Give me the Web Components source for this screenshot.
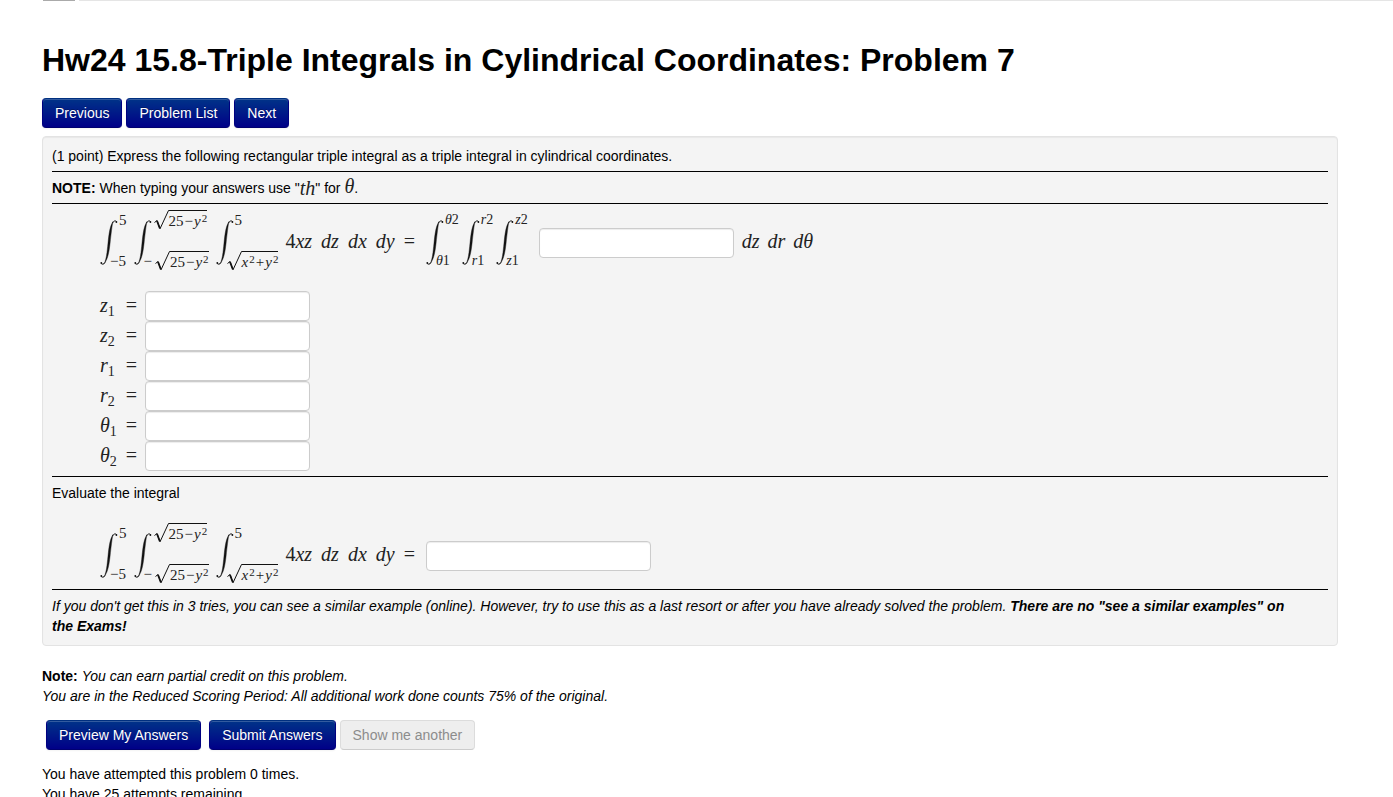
<!DOCTYPE html>
<html lang="en">
<head>
<meta charset="utf-8">
<title>Hw24 15.8-Triple Integrals in Cylindrical Coordinates: Problem 7</title>
<style>
    body{
        margin: 0;
        background-color: white;
        color: black;
        font: 14px/20px "Liberation Sans", Arial, sans-serif;
    }
</style>
</head>
<body>
<problem-page></problem-page>

<script>
// top of the page, heading and everything under it
class ProblemPage extends HTMLElement{
    constructor() {
        super();
        this.attachShadow({mode: "open"});
        this.shadowRoot.innerHTML = `
            <style>
                :host{
                    display: block;
                }
                .crumbs{
                    display: flex;
                    gap: 4px;
                    height: 1px;
                    padding-left: 43px;
                }
                .crumbs i{
                    width: 32px;
                    background-color: #aaa;
                }
                .crumbs b{
                    flex: 1;
                    background-color: #e5e5e5;
                }
                main{
                    padding: 0 55px 0 42px;
                }
                h1{
                    margin: 39px 0 18px;
                    font-size: 32px;
                    line-height: 40px;
                }
                .nav, .actions{
                    display: flex;
                    gap: 4px;
                }
                .nav{
                    margin-bottom: 8px;
                }
                .actions{
                    margin: 14px 0;
                    padding-left: 4px;
                }
                .wide{
                    margin-right: 4px;
                }
                p{
                    margin: 0;
                }
                .notes{
                    margin-top: 20px;
                }
            </style>
            <div class="crumbs"><i></i><b></b></div>
            <main>
                <h1>Hw24 15.8-Triple Integrals in Cylindrical Coordinates: Problem 7</h1>
                <div class="nav">
                    <ww-button>Previous</ww-button>
                    <ww-button>Problem List</ww-button>
                    <ww-button>Next</ww-button>
                </div>
                <problem-body></problem-body>
                <div class="notes">
                    <p><b>Note:</b> <i>You can earn partial credit on this problem.</i></p>
                    <p><i>You are in the Reduced Scoring Period: All additional work done counts 75% of the original.</i></p>
                </div>
                <div class="actions">
                    <ww-button class="wide">Preview My Answers</ww-button>
                    <ww-button>Submit Answers</ww-button>
                    <ww-button disabled>Show me another</ww-button>
                </div>
                <p>You have attempted this problem 0 times.</p>
                <p>You have 25 attempts remaining.</p>
            </main>`;
    }
}

class WwButton extends HTMLElement{
    constructor() {
        super();
        this.attachShadow({mode: "open"});
        this.shadowRoot.innerHTML = `
            <style>
                :host{
                    display: block;
                }
                button{
                    display: block;
                    padding: 4px 12px;
                    border: 1px solid #002277;
                    border-color: #003080 #000080 #000070;
                    border-radius: 4px;
                    background: linear-gradient(#003388, #000088);
                    box-shadow: inset 0 1px 0 rgba(255,255,255,.2), 0 1px 2px rgba(0,0,0,.05);
                    color: white;
                    font: inherit;
                    text-shadow: 0 -1px 0 rgba(0,0,0,.25);
                }
                button:disabled{
                    border-color: #dcdcdc #dcdcdc #ccc;
                    background: #eee;
                    box-shadow: none;
                    color: #8c8c8c;
                    text-shadow: none;
                }
            </style>
            <button type="button"><slot></slot></button>`;
    }

    connectedCallback(){
        this.shadowRoot.querySelector('button').disabled = this.hasAttribute('disabled');
    }
}

// the grey well with the question in it
class ProblemBody extends HTMLElement{
    constructor() {
        super();
        this.attachShadow({mode: "open"});
        const integrals = `
            <math-integral>
                <span slot="upper">5</span>
                <span slot="lower">−5</span>
            </math-integral>
            <math-integral>
                <math-root slot="upper">25<span class="op">−</span><i>y</i><sup>2</sup></math-root>
                <span slot="lower" class="minus">−</span><math-root slot="lower">25<span class="op">−</span><i>y</i><sup>2</sup></math-root>
            </math-integral>
            <math-integral>
                <span slot="upper">5</span>
                <math-root slot="lower"><i>x</i><sup>2</sup><span class="op">+</span><i>y</i><sup>2</sup></math-root>
            </math-integral>
            <span class="terms sum"><span>4<i>xz</i></span><i>dz</i><i>dx</i><i>dy</i><span>=</span></span>`;
        const limits = ['θ', 'r', 'z'].map(v => `
            <math-integral class="small">
                <span slot="upper"><i>${v}</i>2</span>
                <span slot="lower"><i>${v}</i>1</span>
            </math-integral>`).join('');
        const rows = ['z', 'r', 'θ'].map(v => [1, 2].map(n => `
            <limit-answer><i>${v}</i><sub>${n}</sub></limit-answer>`).join('')).join('');
        this.shadowRoot.innerHTML = `
            <style>
                :host{
                    display: block;
                    padding: 9px;
                    border: 1px solid #e3e3e3;
                    border-radius: 4px;
                    background-color: #f4f4f4;
                    box-shadow: inset 0 1px 1px rgba(0,0,0,.05);
                }
                p{
                    margin: 0;
                }
                hr{
                    height: 1px;
                    margin: 5px 0 6px;
                    border: 0;
                    background-color: black;
                }
                .tex{
                    font: italic 20px/1px "Liberation Serif", "Times New Roman", serif;
                    color: #222;
                }
                .low{
                    vertical-align: -2px;
                }
                .answers{
                    padding: 20px 0 0 48px;
                }
                .evaluate{
                    margin-top: 20px;
                }
                .hint{
                    padding-right: 20px;
                }
                .terms{
                    display: flex;
                    gap: 8px;
                }
                .sum{
                    gap: 9px;
                    padding-right: 3px;
                }
                .after{
                    margin-left: 8px;
                }
                .small{
                    --size: 14px;
                    --gap: 3px;
                }
                .op{
                    margin: 0 1px;
                }
                .minus{
                    margin-right: 2px;
                }
                sup, sub{
                    line-height: 1px;
                }
                sup{
                    margin-left: 1px;
                    font-size: 11px;
                    vertical-align: 4px;
                }
                sub{
                    font-size: 14px;
                    vertical-align: -4px;
                }
            </style>
            <p>(1 point) Express the following rectangular triple integral as a triple integral in cylindrical coordinates.</p>
            <hr>
            <p><b>NOTE:</b> When typing your answers use "<span class="tex low">th</span>" for <span class="tex">θ</span>.</p>
            <hr>
            <integral-answer size="195">
                ${integrals}
                <span class="after"></span>
                ${limits}
                <span slot="after" class="terms after"><i>dz</i><i>dr</i><i>dθ</i></span>
            </integral-answer>
            <div class="answers">${rows}</div>
            <hr>
            <p>Evaluate the integral</p>
            <integral-answer size="225" class="evaluate">
                ${integrals}
            </integral-answer>
            <hr>
            <p class="hint"><i>If you don't get this in 3 tries, you can see a similar example (online). However, try to use this as a last resort or after you have already solved the problem. <b>There are no "see a similar examples" on the Exams!</b></i></p>`;
    }
}

const inputStyle = `
    input{
        box-sizing: border-box;
        height: 30px;
        padding: 4px 6px;
        border: 1px solid #ccc;
        border-radius: 4px;
        background-color: white;
        box-shadow: inset 0 1px 1px rgba(0,0,0,.075);
        color: #555;
        font: 14px/20px "Liberation Sans", Arial, sans-serif;
    }`;

// integral on the left, text box, and whatever comes after it
class IntegralAnswer extends HTMLElement{
    constructor() {
        super();
        this.attachShadow({mode: "open"});
        this.shadowRoot.innerHTML = `
            <style>
                ${inputStyle}
                :host{
                    display: flex;
                    align-items: center;
                    padding-left: 48px;
                    color: #222;
                    font: 20px/22px "Liberation Serif", "Times New Roman", serif;
                }
                label{
                    display: flex;
                    align-items: center;
                }
                input{
                    margin: 5px 0 0 8px;
                }
            </style>
            <label for="answer"><slot></slot></label>
            <input id="answer" type="text">
            <slot name="after"></slot>`;
    }

    connectedCallback(){
        this.shadowRoot.querySelector('input').style.width = this.getAttribute('size') + 'px';
    }
}

class LimitAnswer extends HTMLElement{
    constructor() {
        super();
        this.attachShadow({mode: "open"});
        this.shadowRoot.innerHTML = `
            <style>
                ${inputStyle}
                :host{
                    display: flex;
                    gap: 8px;
                }
                label{
                    display: flex;
                    justify-content: space-between;
                    width: 37px;
                    color: #222;
                    font: 20px/28px "Liberation Serif", "Times New Roman", serif;
                }
                input{
                    width: 165px;
                }
            </style>
            <label for="answer"><span><slot></slot></span><span>=</span></label>
            <input id="answer" type="text">`;
    }
}

class MathIntegral extends HTMLElement{
    constructor() {
        super();
        this.attachShadow({mode: "open"});
        this.shadowRoot.innerHTML = `
            <style>
                :host{
                    display: flex;
                    height: 61px;
                    padding-right: var(--gap, 7px);
                    font-size: var(--size, 15px);
                    line-height: 20px;
                }
                svg{
                    flex: none;
                    width: 18px;
                    height: 45px;
                    margin-top: 10px;
                }
                .limits{
                    display: flex;
                    flex-direction: column;
                    justify-content: space-between;
                }
                .limits div{
                    display: flex;
                }
                .upper{
                    padding-left: 1px;
                }
                .lower{
                    margin-left: -8px;
                }
            </style>
            <svg viewBox="0 0 18 45" aria-hidden="true">
                <path d="M1 43.2C2 44.6 3.8 44.6 5 42.6M12.6 3C13.8.6 15.6.3 16.6 1.8" fill="none" stroke="#111" stroke-width="1"/>
                <path d="M4.2 43.6C6.4 39 7 33 8 23 9 13 10 6 13 1.6 12 6 11.2 13 10.1 23 9 33 7.6 39.6 4.2 43.6Z" fill="#111" stroke="#111" stroke-width=".4"/>
                <circle cx="1.3" cy="42.9" r=".9" fill="#111"/>
                <circle cx="16.4" cy="2" r=".9" fill="#111"/>
            </svg>
            <div class="limits">
                <div class="upper"><slot name="upper"></slot></div>
                <div class="lower"><slot name="lower"></slot></div>
            </div>`;
    }
}

class MathRoot extends HTMLElement{
    constructor() {
        super();
        this.attachShadow({mode: "open"});
        this.shadowRoot.innerHTML = `
            <style>
                :host{
                    display: flex;
                    height: 20px;
                }
                svg{
                    flex: none;
                    width: 15px;
                    height: 20px;
                    margin-left: 1px;
                }
                span{
                    box-sizing: border-box;
                    height: 20px;
                    border-top: 1px solid #111;
                    white-space: nowrap;
                }
            </style>
            <svg viewBox="0 0 15 20" aria-hidden="true">
                <path d="M.5 12.5 3 10.5 6 18.8 14.5.5H15" fill="none" stroke="#111" stroke-width="1"/>
                <path d="M3 10.8 5.8 18.3" stroke="#111" stroke-width="1.8"/>
            </svg>
            <span><slot></slot></span>`;
    }
}

customElements.define('ww-button', WwButton)
customElements.define('math-root', MathRoot)
customElements.define('math-integral', MathIntegral)
customElements.define('integral-answer', IntegralAnswer)
customElements.define('limit-answer', LimitAnswer)
customElements.define('problem-body', ProblemBody)
customElements.define('problem-page', ProblemPage)
</script>
</body>
</html>
